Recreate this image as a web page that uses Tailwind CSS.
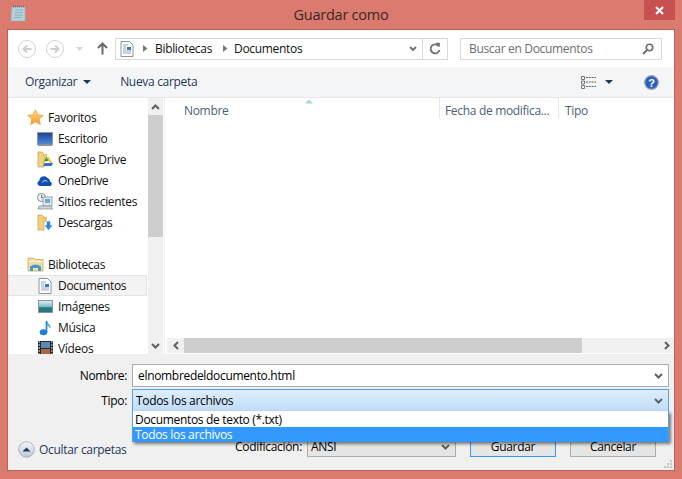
<!DOCTYPE html>
<html lang="es">
<head>
  <meta charset="UTF-8" />
  <meta name="viewport" content="width=device-width, initial-scale=1.0" />
  <title>Guardar como</title>
  <script src="https://cdn.jsdelivr.net/npm/@tailwindcss/browser@4"></script>
</head>
<body class="w-[682px] h-[479px] overflow-hidden bg-[#db7b6f] font-['Open_Sans',sans-serif] text-[12px] tracking-[-0.32px] text-black flex flex-col">

  <!-- barra de titulo -->
  <div class="h-[29px] shrink-0 grid grid-cols-[1fr_auto_1fr]">
    <div class="pl-[10px] pt-[5px]">
      <svg width="16" height="17" viewBox="0 0 16 17">
        <path d="M2 2h13v14H1z" fill="#b5d3dc" stroke="#9ab4bd" stroke-width="0.7"/>
        <path d="M5 5h8M5 7.500h8M4.500 10h8M4 12.500h8" stroke="#8aa7b3" stroke-width="0.8"/>
        <path d="M3 1.500h12" stroke="#5d6c70" stroke-width="1.500" stroke-dasharray="1 1"/>
      </svg>
    </div>
    <div class="text-[14.5px] tracking-[-0.25px] leading-[20px] pt-[5px] text-[#3d2522]">Guardar como</div>
    <div class="flex justify-end pr-[7px]">
      <div class="w-[31px] h-[20px] bg-[#c75050] flex items-center justify-center">
        <svg width="9" height="9" viewBox="0 0 9 9"><path d="M1 1l7 7M8 1l-7 7" stroke="#fff" stroke-width="2"/></svg>
      </div>
    </div>
  </div>

  <!-- ventana -->
  <div class="mx-[7px] h-[442px] shrink-0 bg-white border border-[#b9645a] flex flex-col">

    <!-- direccion -->
    <div class="h-[37px] shrink-0 flex items-center">
      <div class="ml-[9px] flex items-center">
        <svg width="20" height="20" viewBox="0 0 20 20"><circle cx="10" cy="10" r="8.500" fill="#fff" stroke="#d2d2d2"/><path d="M14.500 10h-8M10 6.500L6.500 10l3.500 3.500" fill="none" stroke="#cdcdcd" stroke-width="2"/></svg>
        <svg class="ml-[8px]" width="20" height="20" viewBox="0 0 20 20"><circle cx="10" cy="10" r="8.500" fill="#fff" stroke="#d2d2d2"/><path d="M5.500 10h8M10 6.500l3.500 3.500-3.500 3.500" fill="none" stroke="#cdcdcd" stroke-width="2"/></svg>
        <svg class="ml-[11px]" width="7" height="4" viewBox="0 0 7 4"><path d="M0 0h7L3.500 4z" fill="#d5d5d5"/></svg>
        <svg class="ml-[14px]" width="11" height="13" viewBox="0 0 11 13"><path d="M5.500 12.500V2M1 6l4.500-4.500L10 6" fill="none" stroke="#6a6a6a" stroke-width="2"/></svg>
      </div>
      <div class="ml-[7px] w-[333px] h-[22px] border border-[#d9d9d9] flex items-center">
        <svg class="ml-[4px]" width="14" height="16" viewBox="0 0 14 16">
          <path d="M1 .5h8.500l3.500 3.500v11.500H1z" fill="#fff" stroke="#8b93a1"/>
          <path d="M3 4h5M3 6h3M3 8h3M3 10h8M3 12h8" stroke="#9aa3b3"/>
          <rect x="7" y="6" width="4" height="3" fill="#3a78c9"/>
        </svg>
        <svg class="ml-[9px]" width="5" height="7" viewBox="0 0 5 7"><path d="M0 0l4.500 3.500L0 7z" fill="#7a7a7a"/></svg>
        <span class="ml-[7px] text-[#111]">Bibliotecas</span>
        <svg class="ml-[11px]" width="5" height="7" viewBox="0 0 5 7"><path d="M0 0l4.500 3.500L0 7z" fill="#7a7a7a"/></svg>
        <span class="ml-[6px] text-[#111]">Documentos</span>
        <div class="ml-auto flex items-center h-full">
          <svg class="mr-[5px]" width="8" height="6" viewBox="0 0 8 6"><path d="M1 1l3 3 3-3" fill="none" stroke="#6d6d6d" stroke-width="1.800"/></svg>
          <div class="w-[25px] h-full border-l border-[#d9d9d9] flex items-center justify-center">
            <svg width="12" height="13" viewBox="0 0 12 13"><path d="M9.800 4.300A4.500 4.500 0 1 0 10.500 8" fill="none" stroke="#707070" stroke-width="1.800"/><path d="M6.500 .5l4.500.5-.5 4.500z" fill="#707070"/></svg>
          </div>
        </div>
      </div>
      <div class="ml-[12px] w-[202px] h-[22px] border border-[#d9d9d9] flex items-center pl-[8px] pr-[7px] justify-between">
        <span class="text-[#6d6d6d]">Buscar en Documentos</span>
        <svg width="12" height="12" viewBox="0 0 12 12"><circle cx="7.500" cy="4.500" r="3.200" fill="none" stroke="#6d6d6d" stroke-width="1.600"/><path d="M5 7l-4 4" stroke="#6d6d6d" stroke-width="2"/></svg>
      </div>
    </div>

    <!-- barra de herramientas -->
    <div class="h-[31px] shrink-0 bg-[#f3f5f7] border-b border-[#e3e5e7] flex items-center text-[#1e395b]">
      <span class="ml-[17px]">Organizar</span>
      <svg class="ml-[6px]" width="8" height="4" viewBox="0 0 8 4"><path d="M0 0h8L4 4z" fill="#1e395b"/></svg>
      <span class="ml-[29px]">Nueva carpeta</span>
      <svg class="ml-[384px]" width="15" height="13" viewBox="0 0 15 13">
        <path d="M.5 .5h3v3h-3zM.5 5h3v3h-3zM.5 9.500h3v3h-3z" fill="#fff" stroke="#777"/>
        <path d="M5 1.500h10M5 6h10M5 10.500h10" stroke="#666" stroke-dasharray="2 .8"/>
      </svg>
      <svg class="ml-[9px]" width="8" height="4" viewBox="0 0 8 4"><path d="M0 0h8L4 4z" fill="#1e395b"/></svg>
      <svg class="ml-[31px]" width="15" height="15" viewBox="0 0 15 15"><circle cx="7.500" cy="7.500" r="6.800" fill="#2a5fc4" stroke="#9aa3ae" stroke-width="1.200"/><text x="7.500" y="11.500" text-anchor="middle" font-size="11" font-weight="700" font-family="Liberation Sans" fill="#fff">?</text></svg>
    </div>

    <!-- contenido -->
    <div class="h-[256px] shrink-0 flex">
      <!-- panel izquierdo -->
      <div class="w-[140px] shrink-0 overflow-hidden pt-[9px] text-[#111]">
        <div class="h-[21px] flex items-center pl-[19px]">
          <svg class="w-[17px] h-[17px]" viewBox="0 0 17 17">
            <defs><linearGradient id="st" x1="0" y1="0" x2="0" y2="1"><stop offset="0" stop-color="#ffe07a"/><stop offset="1" stop-color="#f59a2c"/></linearGradient></defs>
            <path d="M8.500 .8l2.300 5 5.400.6-4 3.700 1.100 5.400-4.800-2.700-4.800 2.700 1.100-5.400-4-3.700 5.400-.6z" fill="url(#st)" stroke="#ee9b3d" stroke-width=".8"/>
          </svg>
          <span class="ml-[4px]">Favoritos</span>
        </div>
        <div class="h-[21px] flex items-center pl-[29px]">
          <svg class="w-[16px] h-[14px]" viewBox="0 0 16 14">
            <defs><linearGradient id="mo" x1="0" y1="0" x2="0" y2="1"><stop offset="0" stop-color="#1c3f8f"/><stop offset="1" stop-color="#4f8ee0"/></linearGradient></defs>
            <rect x=".5" y=".5" width="15" height="12" fill="url(#mo)" stroke="#8d99a8"/><path d="M1 13.300h14" stroke="#6d7b8a"/>
          </svg>
          <span class="ml-[5px]">Escritorio</span>
        </div>
        <div class="h-[21px] flex items-center pl-[29px]">
          <svg class="w-[16px] h-[17px]" viewBox="0 0 16 17">
            <path d="M1 1h4l2 2v13H1z" fill="#f3d27e" stroke="#c7a75a" stroke-width=".8"/>
            <path d="M7 3h3v8H7z" fill="#e9c468"/>
            <path d="M9.500 6l2.300 4H7.500L5 14z" fill="#2e9b45"/>
            <path d="M9.500 6h2.200L16 13h-2.300z" fill="#f2c21a"/>
            <path d="M7.600 12h8.400l-1.500 3H6z" fill="#2f6fd8"/>
          </svg>
          <span class="ml-[5px]">Google Drive</span>
        </div>
        <div class="h-[21px] flex items-center pl-[29px]">
          <svg class="w-[16px] h-[12px]" viewBox="0 0 16 12">
            <path d="M3 11a2.700 2.700 0 0 1-.6-5.300A4.500 4.500 0 0 1 10.500 3 3.500 3.500 0 0 1 13 6.500 2.400 2.400 0 0 1 13.500 11z" fill="#0e4fb0"/>
            <path d="M5.300 7.500a3 3 0 0 1 5-1" fill="none" stroke="#fff" stroke-width=".8"/>
          </svg>
          <span class="ml-[5px]">OneDrive</span>
        </div>
        <div class="h-[21px] flex items-center pl-[29px]">
          <svg class="w-[16px] h-[17px]" viewBox="0 0 16 17">
            <circle cx="4.500" cy="4.500" r="4" fill="#eef1f2" stroke="#808a8e"/><path d="M4.500 2v2.700h2.200" fill="none" stroke="#555" stroke-width=".8"/>
            <rect x="6" y="4" width="9" height="9" fill="#dfe6ea" stroke="#8a9498" stroke-width=".8"/>
            <rect x="8" y="6" width="5" height="4" fill="#68a9e0"/>
            <path d="M2 13h12l1.500 3H1z" fill="#cfd5d8" stroke="#7c878b" stroke-width=".7"/>
          </svg>
          <span class="ml-[5px]">Sitios recientes</span>
        </div>
        <div class="h-[21px] flex items-center pl-[29px]">
          <svg class="w-[16px] h-[17px]" viewBox="0 0 16 17">
            <path d="M1 1h4l2 2v13H1z" fill="#f3d27e" stroke="#c7a75a" stroke-width=".8"/>
            <path d="M7 3h3v5H7z" fill="#e9c468"/>
            <path d="M9.500 7h4v4H16l-4.500 5.500L7 11h2.500z" fill="#2c8be0" stroke="#fff" stroke-width=".6"/>
          </svg>
          <span class="ml-[5px]">Descargas</span>
        </div>
        <div class="h-[21px]"></div>
        <div class="h-[21px] flex items-center pl-[19px]">
          <svg class="w-[17px] h-[15px]" viewBox="0 0 17 15">
            <path d="M1 1h6l1.500 1.500H16V14H1z" fill="#f4dc9e" stroke="#c9aa62" stroke-width=".8"/>
            <path d="M1.500 4.500h14" stroke="#fff7dd"/>
            <path d="M3 14V9.500Q8.500 5.500 14 9.500V14h-3v-3H6v3z" fill="#3f9bd8"/>
          </svg>
          <span class="ml-[4px]">Bibliotecas</span>
        </div>
        <div class="h-[21px] mr-[1px] flex items-center pl-[29px] bg-[#f3f3f3] border border-[#e5e5e5]">
          <svg class="w-[14px] h-[16px]" viewBox="0 0 14 16">
            <path d="M1 .5h8.500l3.500 3.500v11.500H1z" fill="#fff" stroke="#8b93a1"/>
            <path d="M3 4h5M3 6h3M3 8h3M3 10h8M3 12h8" stroke="#9aa3b3"/>
            <rect x="7" y="6" width="4" height="3" fill="#3a78c9"/>
          </svg>
          <span class="ml-[6px]">Documentos</span>
        </div>
        <div class="h-[21px] flex items-center pl-[30px]">
          <svg class="w-[15px] h-[13px]" viewBox="0 0 15 13">
            <defs><linearGradient id="im" x1="0" y1="0" x2="0" y2="1"><stop offset="0" stop-color="#dff1f7"/><stop offset=".5" stop-color="#7fbdd0"/><stop offset=".6" stop-color="#2f7f63"/><stop offset="1" stop-color="#1a6db0"/></linearGradient></defs>
            <rect x=".5" y=".5" width="14" height="12" fill="url(#im)" stroke="#8b96a2"/>
          </svg>
          <span class="ml-[5px]">Imágenes</span>
        </div>
        <div class="h-[21px] flex items-center pl-[31px]">
          <svg class="w-[14px] h-[16px]" viewBox="0 0 14 16">
            <path d="M7.500 1v11" stroke="#2b8ddc" stroke-width="1.800"/>
            <ellipse cx="4.500" cy="12.200" rx="3.800" ry="3" fill="#1c7fd6"/>
            <path d="M8 1c.5 3 4.500 3.500 3.500 8-.3-2-2-3-3.500-3.500z" fill="#46a6ea"/>
          </svg>
          <span class="ml-[5px]">Música</span>
        </div>
        <div class="h-[21px] flex items-center pl-[30px]">
          <svg class="w-[15px] h-[15px]" viewBox="0 0 15 15">
            <rect width="15" height="15" fill="#1d2a30"/>
            <rect x="3" y="1" width="9" height="6" fill="#5d87b5"/><rect x="3" y="8" width="9" height="6" fill="#a9683f"/>
            <path d="M.5 1h1.500M.5 4h1.500M.5 7h1.500M.5 10h1.500M.5 13h1.500M13 1h1.500M13 4h1.500M13 7h1.500M13 10h1.500M13 13h1.500" stroke="#fff" stroke-width="1.200"/>
          </svg>
          <span class="ml-[5px]">Vídeos</span>
        </div>
      </div>

      <!-- scroll vertical -->
      <div class="w-[15px] shrink-0 bg-[#f0f0f0] flex flex-col items-center">
        <div class="h-[17px] flex items-center justify-center shrink-0">
          <svg width="9" height="6" viewBox="0 0 9 6"><path d="M1 5l3.500-3.500L8 5" fill="none" stroke="#606060" stroke-width="2"/></svg>
        </div>
        <div class="w-full h-[122px] shrink-0 bg-[#cdcdcd]"></div>
        <div class="mt-auto h-[17px] flex items-center justify-center shrink-0">
          <svg width="9" height="6" viewBox="0 0 9 6"><path d="M1 1l3.500 3.500L8 1" fill="none" stroke="#606060" stroke-width="2"/></svg>
        </div>
      </div>

      <!-- lista de archivos -->
      <div class="flex-1 min-w-0 ml-[1px] border-l border-[#f0f0f0] pl-[2px] flex flex-col">
        <div class="relative h-[20px] shrink-0 flex text-[#4c607a] leading-[16px]">
          <svg class="absolute left-[138px] top-[1px]" width="8" height="5" viewBox="0 0 8 5"><path d="M0 4.500L4 .5l4 4z" fill="#a9cfe6"/></svg>
          <div class="w-[272px] pl-[17px] pt-[5px]">Nombre</div>
          <div class="w-[119px] border-l border-[#e5e5e5] pl-[5px] pt-[5px] whitespace-nowrap">Fecha de modifica...</div>
          <div class="flex-1 border-l border-[#e5e5e5] pl-[6px] pt-[5px]">Tipo</div>
        </div>
        <div class="flex-1"></div>
        <div class="h-[15px] shrink-0 mb-[1px] bg-[#f0f0f0] flex items-center">
          <div class="w-[17px] flex justify-center">
            <svg width="6" height="9" viewBox="0 0 6 9"><path d="M5 1L1.500 4.500 5 8" fill="none" stroke="#606060" stroke-width="2"/></svg>
          </div>
          <div class="w-[398px] h-full bg-[#cdcdcd]"></div>
          <div class="ml-auto w-[15px] flex justify-center">
            <svg width="6" height="9" viewBox="0 0 6 9"><path d="M1 1l3.500 3.500L1 8" fill="none" stroke="#606060" stroke-width="2"/></svg>
          </div>
        </div>
      </div>
    </div>

    <!-- panel inferior -->
    <div class="relative flex-1 bg-[#f0f0f0] pt-[10px] pr-[5px] flex flex-col">
      <div class="h-[23px] flex items-center">
        <div class="w-[119px] text-right">Nombre:</div>
        <div class="ml-[5px] flex-1 h-full bg-white border border-[#acacac] flex items-center justify-between pl-[5px] pr-[5px]">
          <span>elnombredeldocumento.html</span>
          <svg width="9" height="6" viewBox="0 0 9 6"><path d="M1 1l3.500 3.500L8 1" fill="none" stroke="#606060" stroke-width="2"/></svg>
        </div>
      </div>
      <div class="mt-[2px] h-[23px] flex items-center">
        <div class="w-[119px] text-right">Tipo:</div>
        <div class="relative ml-[5px] flex-1 h-full bg-linear-to-b from-[#ddeefd] to-[#c0dcf8] border border-[#569de5] flex items-center justify-between pl-[3px] pr-[5px]">
          <span>Todos los archivos</span>
          <svg width="9" height="6" viewBox="0 0 9 6"><path d="M1 1l3.500 3.500L8 1" fill="none" stroke="#606060" stroke-width="2"/></svg>
          <!-- lista desplegada -->
          <div class="absolute z-10 top-full -left-[1px] -right-[1px] h-[31px] bg-white border-x border-[#569de5] shadow-[2px_2px_3px_rgba(0,0,0,0.5)]">
            <div class="h-[16px] pl-[2px] pt-[2px] flex items-center">Documentos de texto (*.txt)</div>
            <div class="h-[15px] pl-[2px] pt-[1px] flex items-center bg-[#3399ff] text-white">Todos los archivos</div>
          </div>
        </div>
      </div>
      <div class="mt-[24px] h-[21px] flex items-center">
        <div class="ml-[10px] mt-[6px] flex items-center">
          <svg width="17" height="17" viewBox="0 0 17 17">
            <defs><linearGradient id="oc" x1="0" y1="0" x2="0" y2="1"><stop offset="0" stop-color="#f7f9fb"/><stop offset="1" stop-color="#b8c6d6"/></linearGradient></defs>
            <circle cx="8.500" cy="8.500" r="7.800" fill="url(#oc)" stroke="#a9b4c0"/>
            <path d="M4.500 10.500l4-4 4 4z" fill="#1e395b"/>
          </svg>
          <span class="ml-[4px] text-[#1e395b]">Ocultar carpetas</span>
        </div>
        <span class="ml-auto mr-[5px]">Codificación:</span>
        <div class="w-[149px] h-full bg-[#e5e5e5] border border-[#adadad] flex items-center justify-between pl-[3px] pr-[5px]">
          <span>ANSI</span>
          <svg width="9" height="6" viewBox="0 0 9 6"><path d="M1 1l3.500 3.500L8 1" fill="none" stroke="#606060" stroke-width="2"/></svg>
        </div>
        <button class="ml-[14px] w-[86px] h-full bg-[#e5e5e5] border border-[#3399ff] flex items-center justify-center">Guardar</button>
        <button class="ml-[14px] mr-[13px] w-[86px] h-full bg-[#e5e5e5] border border-[#adadad] flex items-center justify-center">Cancelar</button>
      </div>
      <svg class="absolute right-[1px] bottom-[1px]" width="9" height="9" viewBox="0 0 9 9"><path d="M6 0h2v2H6zM3 3h2v2H3zM6 3h2v2H6zM0 6h2v2H0zM3 6h2v2H3zM6 6h2v2H6z" fill="#c4c4c4"/></svg>
    </div>
  </div>
</body>
</html>
